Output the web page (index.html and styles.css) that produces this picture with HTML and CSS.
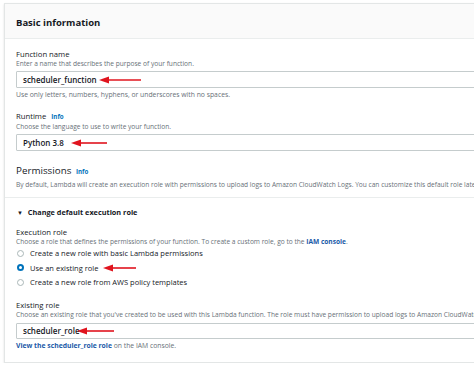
FILE: index.html
```html
<!DOCTYPE html>
<html lang="en">

<head>
    <meta charset="UTF-8">
    <meta name="viewport" content="width=device-width, initial-scale=1.0">
    <title>Basic information</title>
    <link rel="stylesheet" href="styles.css">
</head>

<body>
    <div class="card">
        <div class="card-header">
            <h2 class="card-title">Basic information</h2>
        </div>

        <div class="card-body">
            <div class="field">
                <div class="label">Function name</div>
                <div class="desc">Enter a name that describes the purpose of your function.</div>
                <div class="input">
                    <span class="input-text">scheduler_function</span>
                    <svg class="arrow arrow-fn" width="42" height="8" viewBox="0 0 42 8">
                        <path d="M0 4 L10 0.5 L10 7.5 Z" fill="#e0141e" />
                        <line x1="9" y1="4" x2="42" y2="4" stroke="#e0141e" stroke-width="1.6" />
                    </svg>
                </div>
                <div class="hint">Use only letters, numbers, hyphens, or underscores with no spaces.</div>
            </div>

            <div class="field">
                <div class="label">Runtime <span class="info">Info</span></div>
                <div class="desc">Choose the language to use to write your function.</div>
                <div class="input">
                    <span class="input-text">Python 3.8</span>
                    <svg class="arrow arrow-rt" width="36" height="8" viewBox="0 0 36 8">
                        <path d="M0 4 L10 0.5 L10 7.5 Z" fill="#e0141e" />
                        <line x1="9" y1="4" x2="36" y2="4" stroke="#e0141e" stroke-width="1.6" />
                    </svg>
                </div>
            </div>

            <div class="section-title">Permissions <span class="info">Info</span></div>
            <div class="desc">By default, Lambda will create an execution role with permissions to upload logs to Amazon CloudWatch Logs. You can customize this default role later</div>
        </div>

        <div class="divider"></div>

        <div class="card-body lower">
            <div class="expander"><span class="caret">&#9660;</span> Change default execution role</div>

            <div class="field">
                <div class="label">Execution role</div>
                <div class="desc">Choose a role that defines the permissions of your function. To create a custom role, go to the <span class="link">IAM console</span>.</div>
                <div class="radio-row"><span class="radio"></span> Create a new role with basic Lambda permissions</div>
                <div class="radio-row">
                    <span class="radio checked"></span> Use an existing role
                    <svg class="arrow arrow-radio" width="33" height="8" viewBox="0 0 33 8">
                        <path d="M0 4 L10 0.5 L10 7.5 Z" fill="#e0141e" />
                        <line x1="9" y1="4" x2="33" y2="4" stroke="#e0141e" stroke-width="1.6" />
                    </svg>
                </div>
                <div class="radio-row"><span class="radio"></span> Create a new role from AWS policy templates</div>
            </div>

            <div class="field">
                <div class="label">Existing role</div>
                <div class="desc">Choose an existing role that you've created to be used with this Lambda function. The role must have permission to upload logs to Amazon CloudWatch</div>
                <div class="input short">
                    <span class="input-text">scheduler_role</span>
                    <svg class="arrow arrow-role" width="37" height="8" viewBox="0 0 37 8">
                        <path d="M0 4 L10 0.5 L10 7.5 Z" fill="#e0141e" />
                        <line x1="9" y1="4" x2="37" y2="4" stroke="#e0141e" stroke-width="1.6" />
                    </svg>
                </div>
                <div class="hint"><span class="link">View the scheduler_role role</span> on the IAM console.</div>
            </div>
        </div>
    </div>
</body>

</html>
```

FILE: styles.css
```css
body {
    margin: 0;
    overflow: hidden;
    background-color: #fff;
    font-family: "Open Sans", "Noto Sans", sans-serif;
    color: #16191f;
}

.card {
    width: 520px;
    margin: 3px 0 0 4px;
    border: 1px solid #e3e6e6;
    box-shadow: 0 1px 2px rgba(0, 0, 0, 0.12);
}

.card-header {
    height: 34px;
    background-color: #fafafa;
    border-bottom: 1px solid #eaeded;
    padding-left: 11px;
    display: flex;
    align-items: center;
}

.card-title {
    margin: 2px 0 0 0;
    font-size: 9.5px;
    font-weight: 700;
}

.card-body {
    padding: 10px 11px 0 11px;
}

.card-body.lower {
    padding-top: 9px;
    padding-bottom: 12px;
}

.field + .field {
    margin-top: 12px;
}

.label {
    font-size: 7.7px;
    line-height: 10px;
    white-space: nowrap;
}

.desc {
    font-size: 6.6px;
    line-height: 9px;
    color: #687078;
    white-space: nowrap;
}

.hint {
    margin-top: 2px;
    font-size: 6.8px;
    line-height: 9px;
    color: #687078;
    white-space: nowrap;
}

.info {
    margin-left: 3px;
    font-size: 6.2px;
    font-weight: 700;
    color: #0073bb;
}

.link {
    font-weight: 700;
    color: #1a5aa8;
}

.input {
    position: relative;
    margin-top: 3px;
    height: 15px;
    border: 1px solid #c5cccd;
    border-radius: 1px;
    display: flex;
    align-items: center;
    padding-left: 6px;
}

.input.short {
    margin-top: 4px;
    height: 14px;
}

.input-text {
    font-size: 8px;
    font-weight: 600;
}

.arrow {
    position: absolute;
    top: 50%;
    margin-top: -4px;
}

.arrow-fn {
    left: 82px;
}

.arrow-rt {
    left: 54px;
}

.arrow-role {
    left: 60px;
}

.arrow-radio {
    position: static;
    margin: 0 0 0 5px;
}

.section-title {
    margin-top: 13px;
    font-size: 9.8px;
    line-height: 14px;
}

.section-title .info {
    margin-left: 2px;
}

.section-title + .desc {
    margin-top: 1px;
}

.divider {
    margin-top: 8px;
    border-top: 1px solid #eaeded;
}

.expander {
    font-size: 7.3px;
    line-height: 10px;
    font-weight: 700;
    color: #16191f;
    margin-bottom: 9px;
    margin-left: 1px;
}

.caret {
    font-size: 6px;
    margin-right: 3px;
}

.radio-row {
    display: flex;
    align-items: center;
    height: 14.5px;
    font-size: 7.5px;
    white-space: nowrap;
}

.radio {
    width: 5px;
    height: 5px;
    border: 1px solid #aab7b8;
    border-radius: 50%;
    margin: 0 6px 0 1px;
    flex-shrink: 0;
}

.radio.checked {
    width: 3px;
    height: 3px;
    border: 2px solid #0073bb;
}

.field:has(.radio-row) + .field {
    margin-top: 10px;
}
```
